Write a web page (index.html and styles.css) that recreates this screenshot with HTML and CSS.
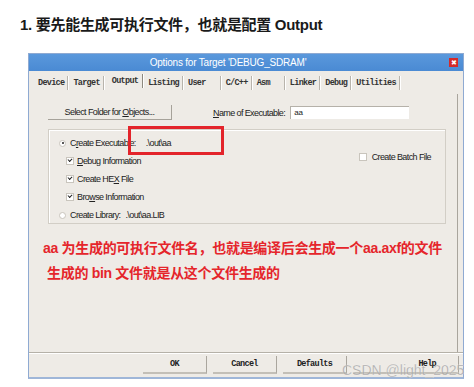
FILE: index.html
```html
<!DOCTYPE html>
<html lang="zh-CN">
<head>
    <meta charset="UTF-8">
    <meta name="viewport" content="width=device-width, initial-scale=1.0">
    <title>配置 Output</title>
    <link rel="stylesheet" href="styles.css">
</head>
<body>
    <h1 class="heading">1. 要先能生成可执行文件，也就是配置 Output</h1>

    <div class="dialog">
        <div class="titlebar">
            <span class="title">Options for Target 'DEBUG_SDRAM'</span>
            <span class="close">&#x2716;</span>
        </div>

        <div class="tabs">
            <span class="tab">Device</span>
            <span class="tab">Target</span>
            <span class="tab active">Output</span>
            <span class="tab">Listing</span>
            <span class="tab wide">User</span>
            <span class="tab">C/C++</span>
            <span class="tab wide">Asm</span>
            <span class="tab">Linker</span>
            <span class="tab">Debug</span>
            <span class="tab">Utilities</span>
        </div>

        <div class="panel">
            <div class="top-row">
                <div class="btn folder">Select Folder for <u>O</u>bjects...</div>
                <span class="name-label"><u>N</u>ame of Executable:</span>
                <div class="input">aa</div>
            </div>

            <div class="group">
                <div class="group-left">
                    <div class="opt"><span class="radio on"></span>C<u>r</u>eate Executable: <span class="path">.\out\aa</span></div>
                    <div class="opt sub"><span class="check on"></span><u>D</u>ebug Information</div>
                    <div class="opt sub"><span class="check on"></span>Create HE<u>X</u> File</div>
                    <div class="opt sub"><span class="check on"></span>Bro<u>w</u>se Information</div>
                    <div class="opt"><span class="radio"></span>Create Library: <span class="path lib">.\out\aa.LIB</span></div>
                </div>
                <div class="batch"><span class="check"></span>Create Batch File</div>
                <div class="highlight"></div>
            </div>

            <p class="note">aa 为生成的可执行文件名，也就是编译后会生成一个aa.axf的文件</p>
            <p class="note second">生成的 bin 文件就是从这个文件生成的</p>
        </div>

        <div class="footer">
            <div class="btn foot ok">OK</div>
            <div class="btn foot">Cancel</div>
            <div class="btn foot">Defaults</div>
            <div class="btn foot help">Help</div>
        </div>

        <span class="watermark">CSDN @light_2025</span>
    </div>
</body>
</html>
```

FILE: styles.css
```css
body {
    margin: 0;
    background-color: white;
    font-family: "Liberation Sans", Arial, "Noto Sans CJK SC", sans-serif;
    color: #222;
}

.heading {
    margin: 15px 0 0 20px;
    font-size: 15px;
    line-height: 20px;
    font-weight: bold;
    color: #1a1a1a;
    letter-spacing: -0.3px;
}

.dialog {
    position: relative;
    margin: 18px 0 0 28px;
    width: 434px;
    height: 323px;
    background-color: #eeebe6;
    border: 1px solid #8faad2;
    border-bottom: 2px solid #9fb6d8;
    display: flex;
    flex-direction: column;
}

.titlebar {
    height: 17px;
    background: linear-gradient(#5a98dc, #4a8ad3);
    display: flex;
    align-items: center;
    justify-content: center;
    position: relative;
    padding-right: 36px;
}

.title {
    color: white;
    font-size: 10px;
    letter-spacing: -0.2px;
}

.close {
    position: absolute;
    right: 5px;
    top: 4px;
    width: 9px;
    height: 9px;
    background-color: #d42a2a;
    color: white;
    font-size: 7px;
    line-height: 9px;
    text-align: center;
}

.tabs {
    height: 23px;
    display: flex;
    align-items: center;
    padding-left: 6px;
    font-family: "Liberation Mono", "Courier New", monospace;
    font-size: 8.5px;
    font-weight: bold;
    letter-spacing: -0.7px;
    color: #333;
}

.tab {
    padding: 0 3px 0 3px;
    border-right: 1px solid #b8b4ac;
    box-shadow: 1px 0 0 white;
    line-height: 14px;
    margin-right: 2px;
}

.tab.active {
    position: relative;
    top: -2px;
    border-right-color: #8d897f;
    padding: 0 4px 0 6px;
}

.tab.wide {
    padding-right: 14px;
}

.panel {
    flex: 1;
    margin-right: 5px;
    border-right: 1px solid #a9a59d;
    padding: 11px 0 0 19px;
}

.top-row {
    display: flex;
    align-items: center;
    height: 15px;
}

.btn {
    font-size: 9px;
    letter-spacing: -0.6px;
    color: #222;
    text-align: center;
    box-sizing: border-box;
}

.folder {
    width: 124px;
    height: 15px;
    line-height: 14px;
    border-right: 1px solid #a6a29a;
    border-bottom: 1px solid #a6a29a;
}

.name-label {
    margin-left: 41px;
    font-size: 9px;
    letter-spacing: -0.6px;
}

.input {
    margin-left: 5px;
    width: 119px;
    height: 13px;
    box-sizing: border-box;
    background-color: white;
    border-top: 1px solid #b5b1a9;
    border-left: 1px solid #b5b1a9;
    font-size: 8px;
    line-height: 11px;
    padding-left: 3px;
}

.group {
    position: relative;
    margin-top: 9px;
    width: 398px;
    height: 95px;
    box-sizing: border-box;
    border: 1px solid #d2cec6;
    box-shadow: inset 1px 1px 0 white;
    display: flex;
    justify-content: space-between;
    font-size: 9px;
    letter-spacing: -0.6px;
}

.group-left {
    padding: 4px 0 0 10px;
}

.opt {
    height: 18px;
    display: flex;
    align-items: center;
    white-space: pre;
}

.opt.sub {
    padding-left: 7px;
}

.radio {
    width: 7px;
    height: 7px;
    border-radius: 50%;
    background-color: white;
    border: 1px solid #c9c5bd;
    box-sizing: border-box;
    margin-right: 4px;
    position: relative;
}

.radio.on::after {
    content: "";
    position: absolute;
    left: 1.5px;
    top: 1.5px;
    width: 2px;
    height: 2px;
    border-radius: 50%;
    background-color: #222;
}

.check {
    width: 8px;
    height: 8px;
    background-color: white;
    border: 1px solid #c9c5bd;
    box-sizing: border-box;
    margin-right: 3px;
    position: relative;
}

.check.on::after {
    content: "";
    position: absolute;
    left: 1px;
    top: 0;
    width: 3px;
    height: 2px;
    border-left: 1.5px solid #222;
    border-bottom: 1.5px solid #222;
    transform: rotate(-45deg);
}

.path {
    margin-left: 8px;
}

.path.lib {
    margin-left: 3px;
}

.batch {
    display: flex;
    align-items: center;
    height: 14px;
    margin: 20px 14px 0 0;
}

.batch .check {
    margin-right: 5px;
}

.highlight {
    position: absolute;
    left: 79px;
    top: -4px;
    width: 96px;
    height: 29px;
    box-sizing: border-box;
    border: 3px solid #e3242b;
}

.note {
    margin: 12px 0 0 -5px;
    font-size: 14px;
    line-height: 25px;
    font-weight: bold;
    color: #e5252b;
    letter-spacing: -0.3px;
    white-space: nowrap;
}

.note.second {
    margin-top: 0;
    margin-left: -1px;
}

.footer {
    height: 25px;
    border-top: 1px solid #b5b1a8;
    box-shadow: inset 0 1px 0 white;
    display: flex;
    align-items: flex-start;
    padding: 3px 0 0 114px;
    box-sizing: border-box;
}

.foot {
    height: 18px;
    line-height: 17px;
    width: 64px;
    margin-right: 6px;
    font-family: "Liberation Mono", "Courier New", monospace;
    font-size: 8.5px;
    font-weight: bold;
    letter-spacing: -0.7px;
    border-right: 1px solid #aaa69e;
    border-bottom: 2px solid #c3bfb7;
}

.foot.help {
    width: 106px;
    margin-right: 0;
    text-align: right;
    padding-right: 22px;
}

.watermark {
    position: absolute;
    left: 313px;
    bottom: -1px;
    font-size: 14px;
    white-space: nowrap;
    color: rgba(150, 150, 150, 0.75);
    -webkit-text-stroke: 0.3px rgba(255, 255, 255, 0.6);
}
```
